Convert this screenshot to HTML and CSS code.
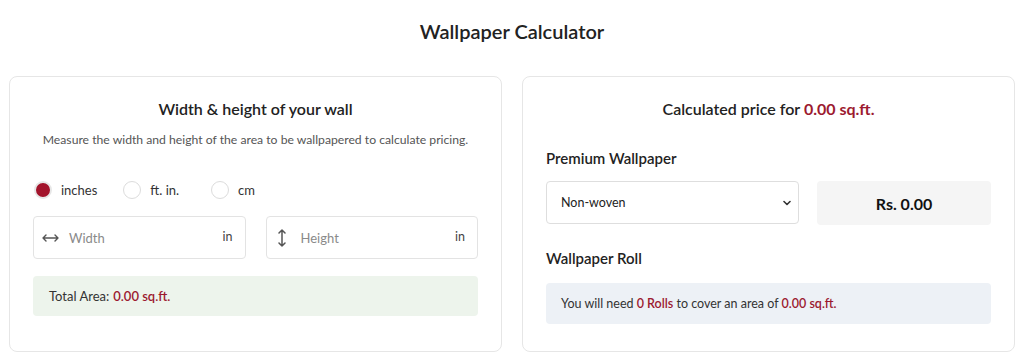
FILE: index.html
```html
<!DOCTYPE html>
<html>
<head>
<meta charset="utf-8">
<link rel="stylesheet" href="styles.css">
</head>
<body>
<div class="page">
  <h1 class="title">Wallpaper Calculator</h1>
  <div class="cards">
    <section class="card">
      <h2 class="card-title">Width &amp; height of your wall</h2>
      <p class="sub">Measure the width and height of the area to be wallpapered to calculate pricing.</p>
      <div class="radios">
        <label class="radio"><span class="dot checked"></span>inches</label>
        <label class="radio"><span class="dot"></span>ft. in.</label>
        <label class="radio"><span class="dot"></span>cm</label>
      </div>
      <div class="inputs">
        <div class="field">
          <svg class="ico" width="17" height="10" viewBox="0 0 17 10"><path d="M1 5h15M4 2L1 5l3 3M13 2l3 3-3 3" fill="none" stroke="#555" stroke-width="1.4" stroke-linecap="round" stroke-linejoin="round"/></svg>
          <span class="ph">Width</span>
          <span class="unit">in</span>
        </div>
        <div class="field">
          <svg class="ico ico-v" width="10" height="18" viewBox="0 0 10 18"><path d="M5 1v16M2 4l3-3 3 3M2 14l3 3 3-3" fill="none" stroke="#555" stroke-width="1.5" stroke-linecap="round" stroke-linejoin="round"/></svg>
          <span class="ph">Height</span>
          <span class="unit">in</span>
        </div>
      </div>
      <div class="total">Total Area: <b class="red">0.00 sq.ft.</b></div>
    </section>
    <section class="card">
      <h2 class="card-title">Calculated price for <b class="red strong">0.00 sq.ft.</b></h2>
      <h3 class="label">Premium Wallpaper</h3>
      <div class="price-row">
        <div class="select">
          <span>Non-woven</span>
          <svg width="8" height="6" viewBox="0 0 8 6"><path d="M1 1.5l3 3 3-3" fill="none" stroke="#333" stroke-width="1.6" stroke-linecap="round" stroke-linejoin="round"/></svg>
        </div>
        <div class="price">Rs. 0.00</div>
      </div>
      <h3 class="label roll">Wallpaper Roll</h3>
      <div class="info">You will need <b class="red">0 Rolls</b> to cover an area of <b class="red">0.00 sq.ft.</b></div>
    </section>
  </div>
</div>
</body>
</html>
```
FILE: styles.css
```css
* { box-sizing: border-box; }
html, body { margin: 0; padding: 0; background: #fff; }
body { font-family: "Lato", "Noto Sans", sans-serif; color: #222; }
.page { padding: 0 9px; }
.title {
  margin: 0;
  padding-top: 19px;
  height: 76px;
  text-align: center;
  font-size: 20px;
  font-weight: 600;
  color: #222;
}
.cards { display: grid; grid-template-columns: 1fr 1fr; gap: 20px; }
.card {
  height: 276px;
  border: 1px solid #e6e6e6;
  border-radius: 8px;
  padding: 21px 23px 0;
}
.card-title {
  margin: 0;
  text-align: center;
  font-size: 16px;
  font-weight: 600;
  line-height: 22px;
  color: #222;
}
.sub {
  margin: 11px 0 0;
  text-align: center;
  font-size: 12.2px;
  color: #555;
  line-height: 18px;
}
.radios { display: flex; margin-top: 30px; height: 22px; align-items: center; }
.radio { display: flex; align-items: center; font-size: 13px; color: #333; margin-right: 25px; }
.radio:nth-child(2) { margin-right: 31px; }
.dot {
  width: 18px; height: 18px; border-radius: 50%;
  border: 1px solid #dcdcdc; background: #fff;
  margin-right: 9px; margin-left: 1px;
}
.dot.checked { background: #a3142c; border: 2px solid #e7e7e7; box-shadow: inset 0 0 0 1px #a3142c; }
.inputs { display: grid; grid-template-columns: 1fr 1fr; gap: 20px; margin-top: 15px; }
.field {
  height: 43px; border: 1px solid #e3e3e3; border-radius: 4px;
  display: flex; align-items: center; padding: 0 12px 0 8px;
}
.ico { flex: none; margin-right: 10px; }
.ico-v { margin-left: 2px; margin-right: 14px; }
.ph { flex: 1; font-size: 13px; color: #8a8a8a; }
.unit { font-size: 12.5px; color: #444; margin-top: -3px; }
.total {
  margin-top: 17px; height: 40px; background: #edf4ec; border-radius: 4px;
  padding: 0 16px; display: flex; align-items: center;
  font-size: 13px; color: #333;
}
.red { color: #9c1a30; font-weight: 600; margin-left: 4px; }
.info .red { margin-left: 0; }
.strong { font-weight: 700; margin-left: 0; }
.label {
  margin: 28px 0 0; font-size: 15px; font-weight: 600; color: #222; line-height: 20px;
}
.price-row { display: grid; grid-template-columns: 253px 1fr; gap: 18px; margin-top: 13px; }
.select {
  height: 43px; border: 1px solid #dedede; border-radius: 4px;
  display: flex; align-items: center; justify-content: space-between;
  padding: 0 7px 0 14px; font-size: 12.5px; color: #222;
}
.price {
  height: 44px; background: #f5f5f5; border-radius: 4px;
  display: flex; align-items: center; justify-content: center;
  font-size: 16px; font-weight: 700; color: #111;
}
.label.roll { margin-top: 23px; }
.info {
  margin-top: 15px; height: 41px; background: #edf1f6; border-radius: 4px;
  padding: 0 15px; display: flex; align-items: center;
  font-size: 12.5px; color: #333; white-space: pre;
}
```
